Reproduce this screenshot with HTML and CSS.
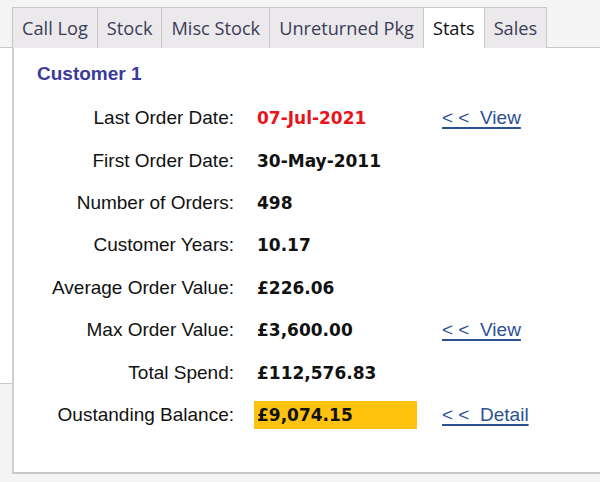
FILE: index.html
```html
<!DOCTYPE html>
<html>
<head>
<meta charset="utf-8">
<link rel="stylesheet" href="styles.css">
</head>
<body>
<div class="tabs">
  <div class="tab">Call Log</div>
  <div class="tab">Stock</div>
  <div class="tab">Misc Stock</div>
  <div class="tab">Unreturned Pkg</div>
  <div class="tab active">Stats</div>
  <div class="tab">Sales</div>
</div>
<div class="main">
  <div class="side">
    <div class="side-top"></div>
    <div class="side-bottom"></div>
  </div>
  <div class="panel">
    <div class="title">Customer 1</div>
    <div class="grid">
      <div class="label">Last Order Date:</div>
      <div class="value red">07-Jul-2021</div>
      <div class="link"><span>&lt; &lt;&nbsp;&nbsp;View</span></div>

      <div class="label">First Order Date:</div>
      <div class="value">30-May-2011</div>
      <div class="link"></div>

      <div class="label">Number of Orders:</div>
      <div class="value">498</div>
      <div class="link"></div>

      <div class="label">Customer Years:</div>
      <div class="value">10.17</div>
      <div class="link"></div>

      <div class="label">Average Order Value:</div>
      <div class="value">£226.06</div>
      <div class="link"></div>

      <div class="label">Max Order Value:</div>
      <div class="value">£3,600.00</div>
      <div class="link"><span>&lt; &lt;&nbsp;&nbsp;View</span></div>

      <div class="label">Total Spend:</div>
      <div class="value">£112,576.83</div>
      <div class="link"></div>

      <div class="label">Oustanding Balance:</div>
      <div class="value"><span class="hilite">£9,074.15</span></div>
      <div class="link"><span>&lt; &lt;&nbsp;&nbsp;Detail</span></div>
    </div>
  </div>
</div>
</body>
</html>
```

FILE: styles.css
```css
html, body {
  margin: 0;
  padding: 0;
}
body {
  width: 600px;
  height: 482px;
  background: #f4f4f4;
  overflow: hidden;
}
.tabs {
  display: flex;
  padding: 7px 0 0 12px;
  height: 40px;
  border-bottom: 1px solid #c9c9c9;
  box-sizing: content-box;
}
.tab {
  box-sizing: border-box;
  height: 41px;
  padding: 0 9px;
  border: 1px solid #c8c8c8;
  border-left: none;
  border-bottom: none;
  background: #ece9ec;
  font-family: "Open Sans", sans-serif;
  font-size: 18.2px;
  color: #3a3d55;
  display: flex;
  align-items: center;
  margin-bottom: -1px;
  line-height: 1;
}
.tab:first-child {
  border-left: 1px solid #c8c8c8;
}
.tab.active {
  background: #ffffff;
  color: #111;
}
.main {
  display: flex;
  height: 426px;
}
.side {
  width: 12px;
  display: flex;
  flex-direction: column;
}
.side-top {
  height: 335px;
  background: #ffffff;
  border-bottom: 1px solid #c8c8c8;
}
.side-bottom {
  flex: 1;
  background: #f3f3f3;
}
.panel {
  flex: 1;
  background: #ffffff;
  border-left: 2px solid #cfcfcf;
  border-bottom: 2px solid #c8c8c8;
  padding: 15px 0 0 23px;
}
.title {
  font-family: "Liberation Sans", Arial, sans-serif;
  font-weight: bold;
  font-size: 19px;
  color: #3b3b9c;
  height: 34px;
}
.grid {
  display: grid;
  grid-template-columns: 197px 163px 1fr;
  grid-auto-rows: 42.4px;
  align-items: center;
}
.label {
  font-family: "Liberation Sans", Arial, sans-serif;
  font-size: 19px;
  color: #111;
  text-align: right;
}
.value {
  font-family: "DejaVu Sans", sans-serif;
  font-weight: bold;
  font-size: 17px;
  color: #111;
  padding-left: 23px;
}
.value.red {
  color: #e8141c;
}
.hilite {
  display: block;
  margin-left: -3px;
  padding-left: 3px;
  width: 163px;
  height: 28px;
  line-height: 28px;
  background: #ffc20e;
  box-sizing: border-box;
}
.link {
  padding-left: 45px;
  font-family: "Liberation Sans", Arial, sans-serif;
  font-size: 19px;
  color: #2c5193;
}
.link span {
  text-decoration: underline;
  text-decoration-thickness: 2px;
  text-underline-offset: 3px;
}
```
